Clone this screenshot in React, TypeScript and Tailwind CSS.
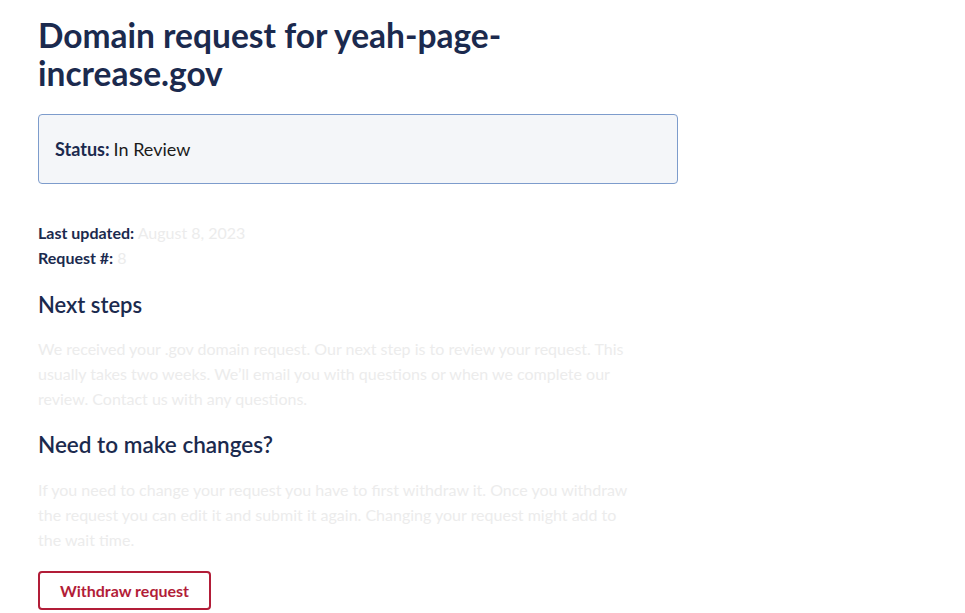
export default function App() {
  return (
    <div className="min-h-[613px] bg-white px-[38px] pt-[16px] text-[#1b2a4e]" style={{ fontFamily: "Lato, 'Noto Sans', sans-serif" }}>
      <h1 className="w-[520px] text-[33.5px] font-bold leading-[38px]">Domain request for yeah-page-increase.gov</h1>

      <div className="mt-[22px] flex h-[70px] w-[640px] items-center rounded border border-[#7d9ccc] bg-[#f4f6f9] px-4 text-[18px] text-[#1b1b1b]">
        <span className="mr-1 font-bold text-[#1b2a4e]">Status:</span>In Review
      </div>

      <div className="mt-[36px] text-[16px] leading-[25px]">
        <p>
          <span className="font-bold">Last updated:</span> <span className="text-[#ececec]">August 8, 2023</span>
        </p>
        <p>
          <span className="font-bold">Request #:</span> <span className="text-[#ececec]">8</span>
        </p>
      </div>

      <h2 className="mt-[21px] text-[22px] font-semibold leading-[28px]">Next steps</h2>
      <p className="mt-[17px] w-[600px] text-[16px] leading-[25px] text-[#ececec]">
        We received your .gov domain request. Our next step is to review your request. This usually takes two weeks.
        We’ll email you with questions or when we complete our review. Contact us with any questions.
      </p>

      <h2 className="mt-[20px] text-[22.5px] font-semibold leading-[28px]">Need to make changes?</h2>
      <p className="mt-[18px] w-[600px] text-[16px] leading-[25px] text-[#ececec]">
        If you need to change your request you have to first withdraw it. Once you withdraw the request you can edit it
        and submit it again. Changing your request might add to the wait time.
      </p>

      <button className="mt-[19px] h-[39px] w-[173px] rounded border-2 border-[#b21d38] text-[16px] font-bold text-[#b21d38]">
        Withdraw request
      </button>
    </div>
  );
}
